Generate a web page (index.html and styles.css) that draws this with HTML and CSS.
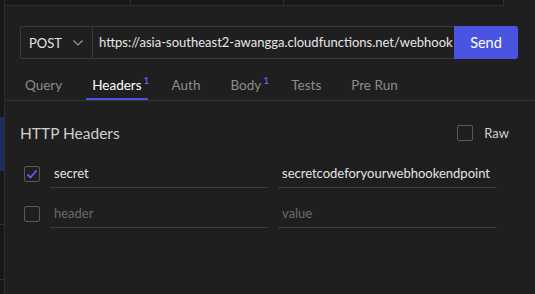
FILE: index.html
```html
<!DOCTYPE html>
<html lang="en">
<head>
    <meta charset="UTF-8">
    <meta name="viewport" content="width=device-width, initial-scale=1.0">
    <title>Request - Headers</title>
    <link rel="stylesheet" href="styles.css">
</head>
<body>
    <div class="app">
        <!-- Sidebar strip -->
        <aside class="rail">
            <div class="rail-gap"></div>
            <div class="rail-active"></div>
            <div class="rail-item"></div>
            <div class="rail-item"></div>
        </aside>

        <main class="panel">
            <div class="topbar">
                <div class="seg seg-a"></div>
                <div class="seg seg-b"></div>
                <div class="seg seg-c"></div>
            </div>

            <div class="content">
                <!-- Request bar -->
                <div class="request-bar">
                    <div class="method">
                        <span>POST</span>
                        <svg class="chevron" width="10" height="6" viewBox="0 0 10 6">
                            <path d="M0.5 0.5 L5 5 L9.5 0.5" fill="none" stroke="#9a9a9a" stroke-width="1.2"/>
                        </svg>
                    </div>
                    <div class="url">https://asia-southeast2-awangga.cloudfunctions.net/webhook</div>
                    <button class="send">Send</button>
                </div>

                <!-- Tabs -->
                <nav class="tabs">
                    <a class="tab"><span class="label">Query</span></a>
                    <a class="tab active"><span class="label">Headers<sup>1</sup></span></a>
                    <a class="tab"><span class="label">Auth</span></a>
                    <a class="tab"><span class="label">Body<sup>1</sup></span></a>
                    <a class="tab"><span class="label">Tests</span></a>
                    <a class="tab"><span class="label">Pre Run</span></a>
                </nav>

                <!-- Headers -->
                <section class="headers">
                    <div class="headers-title">
                        <h2>HTTP Headers</h2>
                        <label class="raw">
                            <span class="checkbox"></span>
                            <span>Raw</span>
                        </label>
                    </div>

                    <div class="row">
                        <span class="checkbox checked">
                            <svg width="14" height="14" viewBox="0 0 14 14">
                                <path d="M2.5 7.5 L5.5 10.5 L11.5 3.5" fill="none" stroke="#5b63ee" stroke-width="1.8"/>
                            </svg>
                        </span>
                        <div class="field">secret</div>
                        <div class="field">secretcodeforyourwebhookendpoint</div>
                    </div>

                    <div class="row">
                        <span class="checkbox"></span>
                        <div class="field placeholder">header</div>
                        <div class="field placeholder">value</div>
                    </div>
                </section>
            </div>
        </main>
    </div>
</body>
</html>
```

FILE: styles.css
```css
body {
    margin: 0;
    padding: 0;
    background-color: #1f1f1f;
    font-family: Lato, "Noto Sans", sans-serif;
    font-size: 13px;
    color: #e2e2e2;
    overflow: hidden;
}
.app {
    display: flex;
    height: 294px;
}

/* Sidebar strip */
.rail {
    width: 4px;
    background-color: #181818;
    border-right: 1px solid #2c2c2c;
    display: flex;
    flex-direction: column;
}
.rail-gap { height: 117px; }
.rail-active {
    height: 54px;
    background-color: #1c2c5e;
}
.rail-item {
    height: 53px;
    border-bottom: 1px solid #333;
}
.rail-item + .rail-item { height: 54px; }

.panel {
    flex: 1;
    min-width: 0;
}
.topbar {
    display: flex;
    width: 499px;
    height: 5px;
    background-color: #181818;
    border-bottom: 1px solid #2e2e2e;
}
.seg { height: 100%; }
.seg-a { width: 125px; border-right: 1px solid #333; }
.seg-b { width: 152px; border-right: 1px solid #333; }
.seg-c { flex: 1; border-right: 1px solid #333; }

.content {
    padding: 20px 17px 0 15px;
}

/* Request bar */
.request-bar {
    display: flex;
    height: 33px;
}
.method {
    width: 73px;
    box-sizing: border-box;
    padding: 0 9px 0 8px;
    display: flex;
    align-items: center;
    justify-content: space-between;
    border: 1px solid #3a3a3a;
    border-radius: 2px 0 0 2px;
    color: #e4e4e4;
}
.url {
    flex: 1;
    min-width: 0;
    overflow: hidden;
    white-space: nowrap;
    padding-left: 6px;
    line-height: 31px;
    border-top: 1px solid #3a3a3a;
    border-bottom: 1px solid #3a3a3a;
    color: #e6e6e6;
}
.send {
    width: 64px;
    border: none;
    background-color: #4a54e1;
    color: #fff;
    font-family: inherit;
    font-size: 14.5px;
    border-radius: 0 3px 3px 0;
    padding: 0;
}

/* Tabs */
.tabs {
    display: flex;
    gap: 18px;
    margin: 0 -17px 0 -15px;
    padding-left: 14px;
    border-bottom: 1px solid #333;
}
.tab {
    padding: 16px 6px 3px;
    line-height: 20px;
    font-size: 13.5px;
    color: #8c8c8c;
    border-bottom: 2px solid transparent;
}
.tab.active {
    color: #fff;
    border-bottom-color: #4a54e1;
}
.label { position: relative; }
.label sup {
    position: absolute;
    left: calc(100% + 2px);
    top: -2px;
    font-size: 10px;
    line-height: 1;
    color: #6970f2;
}

/* Headers */
.headers-title {
    display: flex;
    align-items: center;
    justify-content: space-between;
    margin-top: 20px;
    padding-right: 9px;
}
.headers-title h2 {
    margin: 0;
    font-size: 15.5px;
    font-weight: 400;
    line-height: 24px;
    color: #cfcfcf;
}
.raw {
    display: flex;
    align-items: center;
    gap: 11px;
    color: #d0d0d0;
}
.checkbox {
    width: 16px;
    height: 16px;
    box-sizing: border-box;
    border: 1px solid #5a5a5a;
    border-radius: 2px;
    display: flex;
    align-items: center;
    justify-content: center;
}
.row {
    display: flex;
    align-items: center;
    gap: 10px;
    padding-left: 4px;
    margin-top: 12px;
}
.headers-title + .row { margin-top: 15px; }
.field {
    width: 218px;
    height: 28px;
    box-sizing: border-box;
    padding-left: 4px;
    line-height: 27px;
    border-bottom: 1px solid #3b3b3b;
    color: #e4e4e4;
    white-space: nowrap;
    overflow: hidden;
}
.field + .field { width: 219px; }
.field.placeholder { color: #6b6b6b; }
```
